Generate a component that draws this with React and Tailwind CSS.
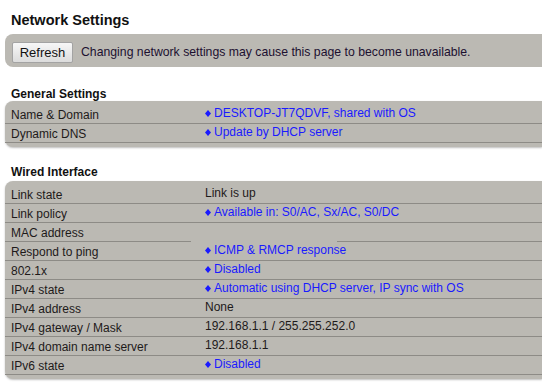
import React from "react";

const Diamond = () => (
  <svg width="6" height="7" viewBox="0 0 6 7" className="inline-block mr-[3px] align-[0px]">
    <polygon points="3,0 6,3.5 3,7 0,3.5" fill="#1a1aff" />
  </svg>
);

function Row({ label, value, link, split }) {
  return (
    <div className={`flex h-[19px] ${split ? "" : "border-b border-[#8d8b86]"}`}>
      <div className={`w-[186px] shrink-0 pl-[6px] pt-[3px] leading-[15px] ${split ? "border-b border-[#8d8b86]" : ""}`}>
        {label}
      </div>
      {split ? (
        <div className="flex flex-1">
          <div className="w-[146px] shrink-0" />
          <div className="flex-1 border-b border-[#8d8b86]" />
        </div>
      ) : (
        <div className={`flex-1 pl-[14px] pt-[1px] leading-[15px] whitespace-nowrap ${link ? "text-[#1a1aff]" : ""}`}>
          {link && <Diamond />}
          {value}
        </div>
      )}
    </div>
  );
}

function Panel({ children }) {
  return (
    <div className="ml-[5px] rounded-l-[8px] bg-[#bbb9b3] pt-[4px] pb-[4px] shadow-[0_1px_2px_rgba(0,0,0,0.25)]">
      {children}
    </div>
  );
}

export default function App() {
  return (
    <div
      className="w-[542px] h-[388px] overflow-hidden bg-white text-[#1e1a1a] text-[12px]"
      style={{ fontFamily: '"Liberation Sans", Arial, sans-serif' }}
    >
      <div className="pt-[10px] pl-[11px] h-[34px] leading-[20px] font-bold text-[14.5px] text-[#111]">
        Network Settings
      </div>
      <div className="ml-[5px] h-[33px] rounded-l-[8px] bg-[#bbb9b3] flex items-center pl-[7px] pt-[4px]">
        <button className="h-[21px] w-[61px] border border-[#a3a3a3] rounded-[2px] bg-gradient-to-b from-[#f7f7f7] to-[#dcdcdc] text-[13px] leading-[19px] text-[#111]">
          Refresh
        </button>
        <span className="ml-[8px] text-[12.25px] whitespace-nowrap text-[#1c1030]">
          Changing network settings may cause this page to become unavailable.
        </span>
      </div>

      <div className="mt-[20px] pl-[11px] h-[14px] leading-[14px] font-bold text-[#111]">General Settings</div>
      <Panel>
        <Row label="Name & Domain" value="DESKTOP-JT7QDVF, shared with OS" link />
        <Row label="Dynamic DNS" value="Update by DHCP server" link />
      </Panel>

      <div className="mt-[18px] mb-[2px] pl-[11px] h-[14px] leading-[14px] font-bold text-[#111]">Wired Interface</div>
      <Panel>
        <Row label="Link state" value="Link is up" />
        <Row label="Link policy" value="Available in: S0/AC, Sx/AC, S0/DC" link />
        <Row label="MAC address" split />
        <Row label="Respond to ping" value="ICMP & RMCP response" link />
        <Row label="802.1x" value="Disabled" link />
        <Row label="IPv4 state" value="Automatic using DHCP server, IP sync with OS" link />
        <Row label="IPv4 address" value="None" />
        <Row label="IPv4 gateway / Mask" value="192.168.1.1 / 255.255.252.0" />
        <Row label="IPv4 domain name server" value="192.168.1.1" />
        <Row label="IPv6 state" value="Disabled" link />
      </Panel>
    </div>
  );
}
